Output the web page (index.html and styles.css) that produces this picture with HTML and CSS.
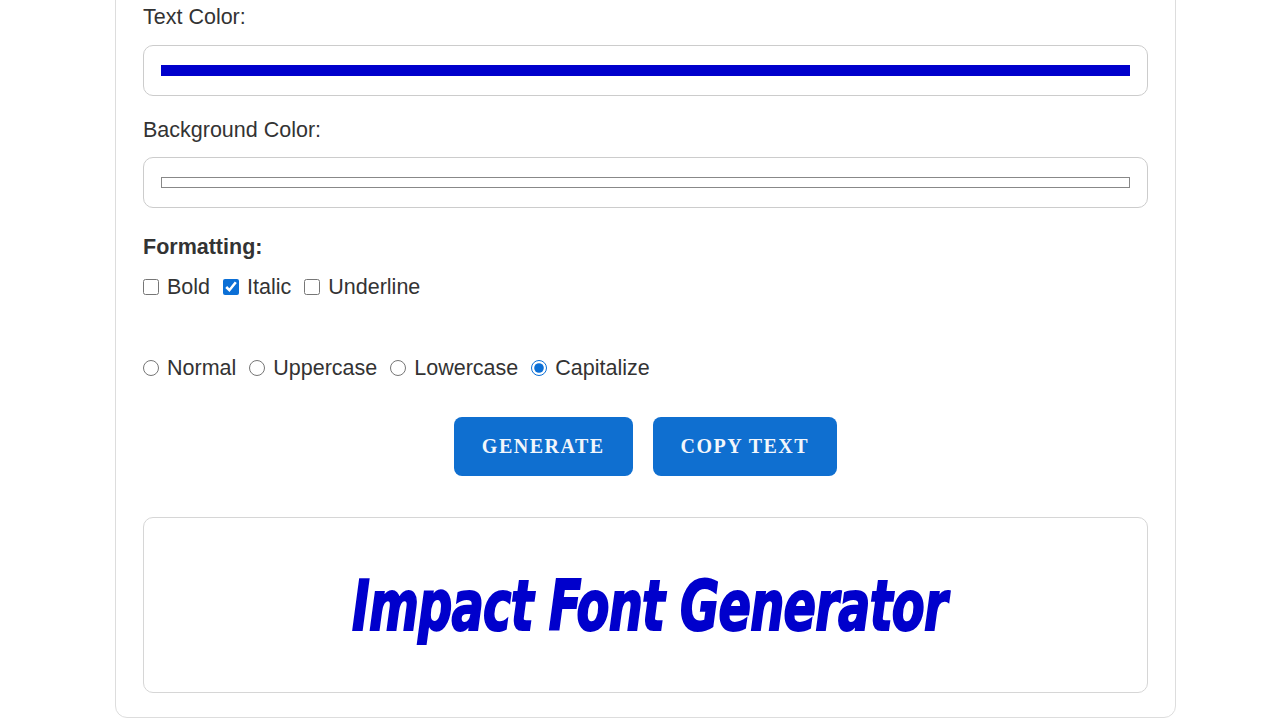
FILE: index.html
```html
<!DOCTYPE html>
<html lang="en">
<head>
<meta charset="utf-8">
<title>Impact Font Generator</title>
<link rel="stylesheet" href="styles.css">
</head>
<body>
<div class="card">
  <div class="label">Text Color:</div>
  <div class="color-box"><div class="swatch swatch-blue"></div></div>

  <div class="label label-gap">Background Color:</div>
  <div class="color-box"><div class="swatch swatch-white"></div></div>

  <div class="label label-bold">Formatting:</div>
  <div class="options">
    <label class="opt"><input type="checkbox"> Bold</label>
    <label class="opt"><input type="checkbox" checked> Italic</label>
    <label class="opt"><input type="checkbox"> Underline</label>
  </div>

  <div class="options radios">
    <label class="opt"><input type="radio" name="case"> Normal</label>
    <label class="opt"><input type="radio" name="case"> Uppercase</label>
    <label class="opt"><input type="radio" name="case"> Lowercase</label>
    <label class="opt"><input type="radio" name="case" checked> Capitalize</label>
  </div>

  <div class="buttons">
    <button class="btn">Generate</button>
    <button class="btn">Copy Text</button>
  </div>

  <div class="preview">
    <span class="preview-text">Impact Font Generator</span>
  </div>
</div>
</body>
</html>
```
FILE: styles.css
```css
html, body {
  margin: 0;
  padding: 0;
  background: #ffffff;
}
body {
  font-family: "Liberation Sans", Arial, sans-serif;
  color: #333333;
  overflow: hidden;
}
.card {
  width: 1005px;
  margin: -30px 0 0 115px;
  padding: 30px 27px 24px 27px;
  border: 1px solid #dddddd;
  border-radius: 12px;
}
.label {
  font-size: 21.5px;
  line-height: 24px;
  margin-top: 4px;
  margin-bottom: 16px;
}
.label-gap {
  margin-top: 22px;
  margin-bottom: 15px;
}
.label-bold {
  font-weight: bold;
  margin-top: 27px;
  margin-bottom: 16px;
}
.color-box {
  border: 1px solid #cccccc;
  border-radius: 10px;
  padding: 19px 17px;
}
.swatch {
  height: 11px;
}
.swatch-blue {
  background: #0000cc;
}
.swatch-white {
  background: #ffffff;
  border: 1px solid #888888;
  height: 9px;
}
.options {
  display: flex;
  align-items: center;
  gap: 13px;
  font-size: 21.5px;
  line-height: 24px;
}
.radios {
  margin-top: 57px;
}
.opt {
  display: flex;
  align-items: center;
  gap: 8px;
}
.opt input {
  width: 16px;
  height: 16px;
  margin: 0;
  accent-color: #0b6fd6;
}
.buttons {
  display: flex;
  justify-content: center;
  gap: 20px;
  margin-top: 37px;
}
.btn {
  font-family: "Liberation Serif", "Times New Roman", serif;
  font-weight: bold;
  font-size: 20px;
  letter-spacing: 1.5px;
  text-transform: uppercase;
  color: #f2f6fb;
  background: #0f6fd0;
  border: none;
  border-radius: 8px;
  height: 59px;
  padding: 0 28px;
}
.preview {
  margin-top: 41px;
  height: 174px;
  border: 1px solid #d6d6d6;
  border-radius: 10px;
  display: flex;
  align-items: center;
  justify-content: center;
}
.preview-text {
  font-family: Impact, "Liberation Sans Narrow", "DejaVu Sans Condensed", sans-serif;
  font-weight: bold;
  font-style: italic;
  font-size: 70px;
  color: #0000cc;
  -webkit-text-stroke: 2px #0000cc;
  display: inline-block;
  transform: scaleX(0.76);
  letter-spacing: -1px;
  position: relative;
  top: 1px;
  left: 4px;
}
```
